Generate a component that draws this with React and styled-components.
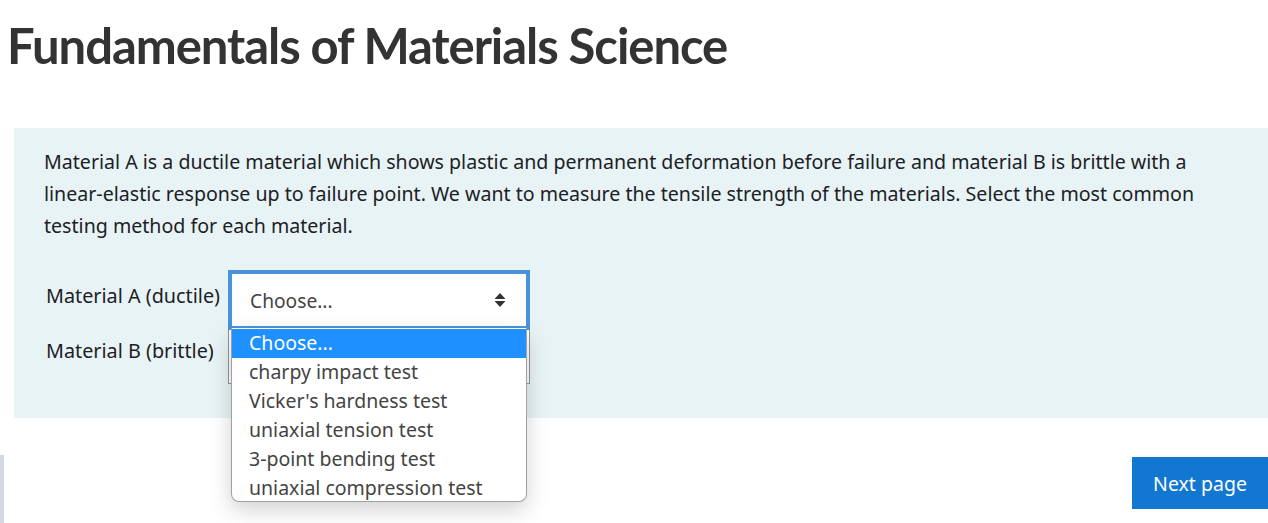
import React from 'react';
import styled, { createGlobalStyle } from 'styled-components';

const GlobalStyle = createGlobalStyle`
  html, body {
    margin: 0;
    padding: 0;
    background: #fff;
    overflow: hidden;
  }
  body {
    font-family: "Noto Sans", "Open Sans", sans-serif;
    color: #1d2125;
  }
`;

const OPTIONS = [
  'Choose...',
  'charpy impact test',
  "Vicker's hardness test",
  'uniaxial tension test',
  '3-point bending test',
  'uniaxial compression test',
];

const Page = styled.div`
  width: 1268px;
  height: 523px;
  position: relative;
  overflow: hidden;
`;

const Title = styled.h1`
  margin: 0;
  padding: 16px 0 0 7px;
  height: 110px;
  box-sizing: border-box;
  font-family: Lato, sans-serif;
  font-weight: 700;
  font-size: 49px;
  letter-spacing: -1.05px;
  color: #333;
`;

const Panel = styled.div`
  margin: 18px 0 0 14px;
  width: 1270px;
  height: 290px;
  box-sizing: border-box;
  background: #e7f3f5;
  padding: 18px 70px 0 30px;
`;

const Question = styled.p`
  margin: 0 0 28px 0;
  font-size: 19.6px;
  line-height: 32px;
  color: #1d2125;
`;

const Row = styled.div`
  display: flex;
  align-items: center;
  height: ${(p) => p.h}px;
  padding-left: 2px;
`;

const Label = styled.span`
  font-size: 19.8px;
  width: 182px;
  margin-top: ${(p) => p.offset || 0}px;
`;

const SelectWrap = styled.div`
  position: relative;
`;

const Select = styled.div`
  width: 302px;
  height: ${(p) => (p.focused ? 60 : 56)}px;
  box-sizing: border-box;
  background: #fff;
  border: ${(p) => (p.focused ? '4px solid #4a93da' : '1px solid #8f959e')};
  display: flex;
  align-items: center;
  justify-content: space-between;
  padding: 0 20px 0 18px;
  font-size: 19.2px;
  color: #444;
`;

const Arrows = styled.svg`
  width: 12px;
  height: 16px;
`;

const Menu = styled.ul`
  position: absolute;
  top: 58px;
  left: 3px;
  width: 296px;
  margin: 0;
  padding: 1px 0 0 0;
  list-style: none;
  background: #fff;
  border: 1px solid #a0a0a0;
  border-top: none;
  border-radius: 0 0 8px 8px;
  box-shadow: 0 8px 22px rgba(0, 0, 0, 0.18);
  box-sizing: border-box;
  height: 174px;
  overflow: hidden;
  z-index: 5;
`;

const Option = styled.li`
  height: 29px;
  line-height: 27px;
  padding-left: 17px;
  font-size: 19.5px;
  color: ${(p) => (p.active ? '#fff' : '#444')};
  background: ${(p) => (p.active ? '#1e90ff' : 'transparent')};
`;

const Footer = styled.div`
  display: flex;
  justify-content: space-between;
  align-items: flex-start;
  margin-top: 37px;
`;

const SideMark = styled.div`
  width: 4px;
  height: 70px;
  background: #d4d9e0;
`;

const NextButton = styled.button`
  width: 136px;
  height: 52px;
  margin-top: 2px;
  border: none;
  background: #1177d1;
  color: #fff;
  font-family: "Noto Sans", sans-serif;
  font-size: 19.5px;
  padding: 0;
`;

export default function App() {
  return (
    <Page>
      <GlobalStyle />
      <Title>Fundamentals of Materials Science</Title>
      <Panel>
        <Question>
          Material A is a ductile material which shows plastic and permanent deformation before
          failure and material B is brittle with a linear-elastic response up to failure point. We
          want to measure the tensile strength of the materials. Select the most common testing
          method for each material.
        </Question>
        <Row h={60}>
          <Label offset={-10}>Material A (ductile)</Label>
          <SelectWrap>
            <Select focused>
              <span>Choose...</span>
              <Arrows viewBox="0 0 12 16">
                <path d="M6 1 L11.5 7 H0.5 Z M6 15 L11.5 9 H0.5 Z" fill="#333" />
              </Arrows>
            </Select>
            <Menu>
              {OPTIONS.map((o, i) => (
                <Option key={o} active={i === 0}>
                  {o}
                </Option>
              ))}
            </Menu>
          </SelectWrap>
        </Row>
        <Row h={52}>
          <Label offset={-12}>Material B (brittle)</Label>
          <Select />
        </Row>
      </Panel>
      <Footer>
        <SideMark />
        <NextButton>Next page</NextButton>
      </Footer>
    </Page>
  );
}
